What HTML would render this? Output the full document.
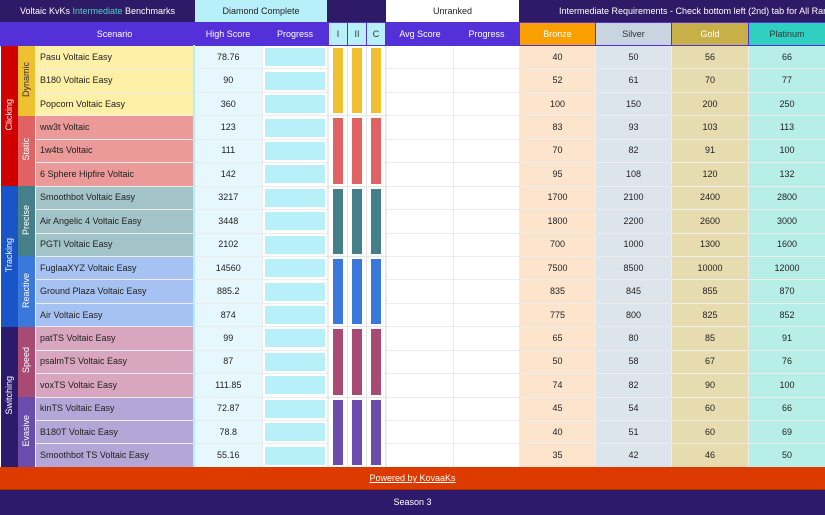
<!DOCTYPE html>
<html><head><meta charset="utf-8"><style>
*{margin:0;padding:0;box-sizing:border-box}
body{width:825px;height:515px;overflow:hidden;font-family:"Liberation Sans",sans-serif;font-size:9px;color:#222;background:#fff;position:relative;line-height:11px}
.h1{position:absolute;top:0;height:22px;line-height:22px;text-align:center;font-size:9px}
table{position:absolute;top:22px;left:0;border-collapse:collapse;table-layout:fixed;width:825px}
td{height:23.45px;border:1px solid rgba(0,0,0,0.07);text-align:center;white-space:nowrap;overflow:hidden;padding:0;line-height:11px}
tr{height:23.45px}
tr.hd,tr.hd td{height:23px}
tr.hd td{background:#5330d8;color:#fff;border-color:#5330d8}
.nm{text-align:left;padding-left:4px}
.hs{background:#e6f8fd;border-left:2px solid #b8ecf6}
.pg div{margin:0 2px;height:18px;background:#b8f0fa}
.bar{position:relative;background:#fff;border:1px solid #e6e6e6}
.bar div{position:absolute;left:4px;right:4px;top:2px;bottom:2px}
.vt{writing-mode:vertical-rl;transform:rotate(180deg);color:#fff;display:inline-block;font-size:9px}
.cat{border:none}
.b{background:#fde4cc}.s{background:#dce4ec}.g{background:#e6dcb0}.p{background:#b8eee8}
.foot1{position:absolute;top:467px;left:0;width:825px;height:23px;background:#dd3a00;color:#fff;text-align:center;line-height:23px;border-bottom:1px solid #b03000}
.foot2{position:absolute;top:490px;left:0;width:825px;height:25px;background:#2e1a6b;color:#fff;text-align:center;line-height:25px}
</style></head><body>
<div class="h1" style="left:0;width:195px;background:#2e1a66;color:#fff">Voltaic KvKs <span style="color:#4fd0c8">Intermediate</span> Benchmarks</div>
<div class="h1" style="left:195px;width:132px;background:#b8f0fa">Diamond Complete</div>
<div class="h1" style="left:327px;width:59px;background:#2e1a66"></div>
<div class="h1" style="left:386px;width:133px;background:#fff">Unranked</div>
<div class="h1" style="left:519px;width:306px;background:#2e1a66;color:#fff;text-align:left;padding-left:40px;white-space:nowrap;overflow:hidden">Intermediate Requirements - Check bottom left (2nd) tab for All Ranks</div>
<table>
<colgroup><col style="width:17px"><col style="width:18px"><col style="width:158px"><col style="width:69px"><col style="width:65px"><col style="width:1px"><col style="width:19px"><col style="width:19px"><col style="width:19px"><col style="width:1px"><col style="width:67px"><col style="width:66px"><col style="width:76px"><col style="width:76px"><col style="width:77px"><col style="width:77px"></colgroup>
<tr class="hd"><td></td><td></td><td>Scenario</td><td>High Score</td><td>Progress</td><td style="background:#b8f0fa"></td><td style="background:#b8f0fa;color:#333">I</td><td style="background:#b8f0fa;color:#333">II</td><td style="background:#b8f0fa;color:#333">C</td><td style="background:#b8f0fa"></td><td>Avg Score</td><td>Progress</td><td style="background:#f9a000">Bronze</td><td style="background:#c8d4e0;color:#333">Silver</td><td style="background:#c8b048">Gold</td><td style="background:#30d0c0;color:#333">Platinum</td></tr>

<tr style="background:#fff0a8"><td rowspan="6" class="cat" style="background:#d10000"><span class="vt">Clicking</span></td><td rowspan="3" class="cat" style="background:#f0c030"><span class="vt" style="color:#333">Dynamic</span></td><td class="nm">Pasu Voltaic Easy</td><td class="hs">78.76</td><td class="pg" style="background:#fff"><div></div></td><td style="background:#fff" rowspan="3"></td><td class="bar" rowspan="3"><div style="background:#f0c030"></div></td><td class="bar" rowspan="3"><div style="background:#f0c030"></div></td><td class="bar" rowspan="3"><div style="background:#f0c030"></div></td><td style="background:#fff" rowspan="3"></td><td style="background:#fff"></td><td style="background:#fff"></td><td class="b">40</td><td class="s">50</td><td class="g">56</td><td class="p">66</td></tr>
<tr style="background:#fff0a8"><td class="nm">B180 Voltaic Easy</td><td class="hs">90</td><td class="pg" style="background:#fff"><div></div></td><td style="background:#fff"></td><td style="background:#fff"></td><td class="b">52</td><td class="s">61</td><td class="g">70</td><td class="p">77</td></tr>
<tr style="background:#fff0a8"><td class="nm">Popcorn Voltaic Easy</td><td class="hs">360</td><td class="pg" style="background:#fff"><div></div></td><td style="background:#fff"></td><td style="background:#fff"></td><td class="b">100</td><td class="s">150</td><td class="g">200</td><td class="p">250</td></tr>

<tr style="background:#eb9999"><td rowspan="3" class="cat" style="background:#e06262"><span class="vt">Static</span></td><td class="nm">ww3t Voltaic</td><td class="hs">123</td><td class="pg" style="background:#fff"><div></div></td><td style="background:#fff" rowspan="3"></td><td class="bar" rowspan="3"><div style="background:#e06262"></div></td><td class="bar" rowspan="3"><div style="background:#e06262"></div></td><td class="bar" rowspan="3"><div style="background:#e06262"></div></td><td style="background:#fff" rowspan="3"></td><td style="background:#fff"></td><td style="background:#fff"></td><td class="b">83</td><td class="s">93</td><td class="g">103</td><td class="p">113</td></tr>
<tr style="background:#eb9999"><td class="nm">1w4ts Voltaic</td><td class="hs">111</td><td class="pg" style="background:#fff"><div></div></td><td style="background:#fff"></td><td style="background:#fff"></td><td class="b">70</td><td class="s">82</td><td class="g">91</td><td class="p">100</td></tr>
<tr style="background:#eb9999"><td class="nm">6 Sphere Hipfire Voltaic</td><td class="hs">142</td><td class="pg" style="background:#fff"><div></div></td><td style="background:#fff"></td><td style="background:#fff"></td><td class="b">95</td><td class="s">108</td><td class="g">120</td><td class="p">132</td></tr>

<tr style="background:#a2c4c8"><td rowspan="6" class="cat" style="background:#1a55c8"><span class="vt">Tracking</span></td><td rowspan="3" class="cat" style="background:#45808a"><span class="vt">Precise</span></td><td class="nm">Smoothbot Voltaic Easy</td><td class="hs">3217</td><td class="pg" style="background:#fff"><div></div></td><td style="background:#fff" rowspan="3"></td><td class="bar" rowspan="3"><div style="background:#45808a"></div></td><td class="bar" rowspan="3"><div style="background:#45808a"></div></td><td class="bar" rowspan="3"><div style="background:#45808a"></div></td><td style="background:#fff" rowspan="3"></td><td style="background:#fff"></td><td style="background:#fff"></td><td class="b">1700</td><td class="s">2100</td><td class="g">2400</td><td class="p">2800</td></tr>
<tr style="background:#a2c4c8"><td class="nm">Air Angelic 4 Voltaic Easy</td><td class="hs">3448</td><td class="pg" style="background:#fff"><div></div></td><td style="background:#fff"></td><td style="background:#fff"></td><td class="b">1800</td><td class="s">2200</td><td class="g">2600</td><td class="p">3000</td></tr>
<tr style="background:#a2c4c8"><td class="nm">PGTI Voltaic Easy</td><td class="hs">2102</td><td class="pg" style="background:#fff"><div></div></td><td style="background:#fff"></td><td style="background:#fff"></td><td class="b">700</td><td class="s">1000</td><td class="g">1300</td><td class="p">1600</td></tr>

<tr style="background:#a6c2f2"><td rowspan="3" class="cat" style="background:#3a78dc"><span class="vt">Reactive</span></td><td class="nm">FuglaaXYZ Voltaic Easy</td><td class="hs">14560</td><td class="pg" style="background:#fff"><div></div></td><td style="background:#fff" rowspan="3"></td><td class="bar" rowspan="3"><div style="background:#3a78dc"></div></td><td class="bar" rowspan="3"><div style="background:#3a78dc"></div></td><td class="bar" rowspan="3"><div style="background:#3a78dc"></div></td><td style="background:#fff" rowspan="3"></td><td style="background:#fff"></td><td style="background:#fff"></td><td class="b">7500</td><td class="s">8500</td><td class="g">10000</td><td class="p">12000</td></tr>
<tr style="background:#a6c2f2"><td class="nm">Ground Plaza Voltaic Easy</td><td class="hs">885.2</td><td class="pg" style="background:#fff"><div></div></td><td style="background:#fff"></td><td style="background:#fff"></td><td class="b">835</td><td class="s">845</td><td class="g">855</td><td class="p">870</td></tr>
<tr style="background:#a6c2f2"><td class="nm">Air Voltaic Easy</td><td class="hs">874</td><td class="pg" style="background:#fff"><div></div></td><td style="background:#fff"></td><td style="background:#fff"></td><td class="b">775</td><td class="s">800</td><td class="g">825</td><td class="p">852</td></tr>

<tr style="background:#d8a6be"><td rowspan="6" class="cat" style="background:#2e1a6b"><span class="vt">Switching</span></td><td rowspan="3" class="cat" style="background:#a84a74"><span class="vt">Speed</span></td><td class="nm">patTS Voltaic Easy</td><td class="hs">99</td><td class="pg" style="background:#fff"><div></div></td><td style="background:#fff" rowspan="3"></td><td class="bar" rowspan="3"><div style="background:#a84a74"></div></td><td class="bar" rowspan="3"><div style="background:#a84a74"></div></td><td class="bar" rowspan="3"><div style="background:#a84a74"></div></td><td style="background:#fff" rowspan="3"></td><td style="background:#fff"></td><td style="background:#fff"></td><td class="b">65</td><td class="s">80</td><td class="g">85</td><td class="p">91</td></tr>
<tr style="background:#d8a6be"><td class="nm">psalmTS Voltaic Easy</td><td class="hs">87</td><td class="pg" style="background:#fff"><div></div></td><td style="background:#fff"></td><td style="background:#fff"></td><td class="b">50</td><td class="s">58</td><td class="g">67</td><td class="p">76</td></tr>
<tr style="background:#d8a6be"><td class="nm">voxTS Voltaic Easy</td><td class="hs">111.85</td><td class="pg" style="background:#fff"><div></div></td><td style="background:#fff"></td><td style="background:#fff"></td><td class="b">74</td><td class="s">82</td><td class="g">90</td><td class="p">100</td></tr>

<tr style="background:#b4a6d6"><td rowspan="3" class="cat" style="background:#6a4cac"><span class="vt">Evasive</span></td><td class="nm">kinTS Voltaic Easy</td><td class="hs">72.87</td><td class="pg" style="background:#fff"><div></div></td><td style="background:#fff" rowspan="3"></td><td class="bar" rowspan="3"><div style="background:#6a4cac"></div></td><td class="bar" rowspan="3"><div style="background:#6a4cac"></div></td><td class="bar" rowspan="3"><div style="background:#6a4cac"></div></td><td style="background:#fff" rowspan="3"></td><td style="background:#fff"></td><td style="background:#fff"></td><td class="b">45</td><td class="s">54</td><td class="g">60</td><td class="p">66</td></tr>
<tr style="background:#b4a6d6"><td class="nm">B180T Voltaic Easy</td><td class="hs">78.8</td><td class="pg" style="background:#fff"><div></div></td><td style="background:#fff"></td><td style="background:#fff"></td><td class="b">40</td><td class="s">51</td><td class="g">60</td><td class="p">69</td></tr>
<tr style="background:#b4a6d6"><td class="nm">Smoothbot TS Voltaic Easy</td><td class="hs">55.16</td><td class="pg" style="background:#fff"><div></div></td><td style="background:#fff"></td><td style="background:#fff"></td><td class="b">35</td><td class="s">42</td><td class="g">46</td><td class="p">50</td></tr>
</table>
<div class="foot1"><span style="text-decoration:underline">Powered by KovaaKs</span></div>
<div class="foot2">Season 3</div>
</body></html>
